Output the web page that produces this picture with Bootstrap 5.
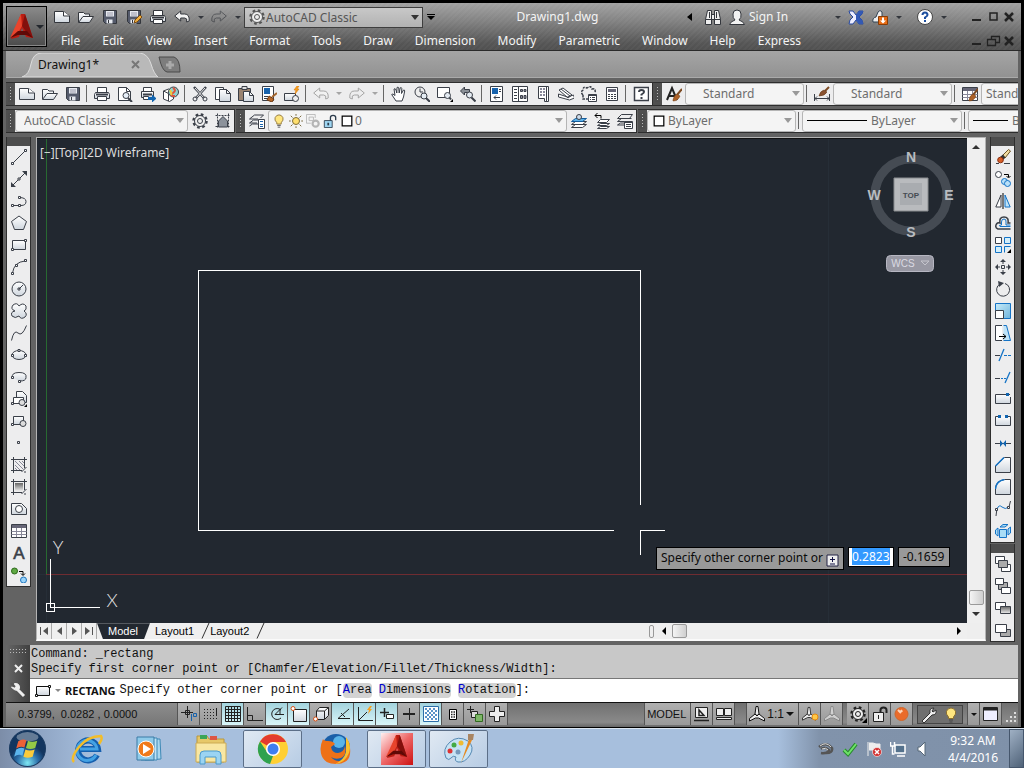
<!DOCTYPE html>
<html lang="en">
<head>
<meta charset="utf-8">
<meta name="viewport" content="width=device-width, initial-scale=1">
<title>Drawing1.dwg</title>
<link href="https://cdn.jsdelivr.net/npm/bootstrap@5.3.0/dist/css/bootstrap.min.css" rel="stylesheet">
<style>
body{font:12px/16px "Noto Sans","Open Sans",sans-serif;background:#000;color:#222;overflow:hidden}
button,input,select{font:inherit;color:inherit}
button{border:0;padding:0;background:none;display:flex;align-items:center;justify-content:center;flex:none}
svg{display:block;flex:none}
a{color:inherit;text-decoration:none}
.ic{width:16px;height:16px;fill:none;stroke:currentColor;overflow:visible}
.frame{border:3px solid #000;border-bottom-width:1px;background:#636363;min-height:0}
/* title bar */
.titlebar{height:48px;border-bottom:1px solid #2a2a2a;background:repeating-linear-gradient(135deg,#ffffff08 0 2px,#0000 2px 4px),linear-gradient(#a2a2a2,#858585 35%,#565656 85%,#505050);color:#33363c}
.titlemain{min-width:0}
.appbtn{width:41px;height:41px;margin:3px 3px 0 3px;border:1px solid #000;outline:1px solid #888;outline-offset:-2px;background:linear-gradient(#8a8a8a,#4b4b4b);gap:2px;color:#23272d}
.qrow{height:28px}
.qrow .tool{width:24px}
.drop{width:13px;height:20px}
.drop::after,.caret::after{content:"";display:block;border:4px solid transparent;border-top-color:currentColor;border-bottom:0}
.drop::after{border-width:3px;border-bottom:0}
.light{color:#f4f4f4}
.custom{width:15px;height:20px;color:#000}
.menu{gap:22px;height:19px;padding-left:11px}
.signin{width:38px;white-space:nowrap;margin-right:44px}
.helpdrop{margin-right:19px}
.wbtn{width:16px;height:16px;color:#222}
/* file tabs */
.strip{height:27px;margin:0 3px;background:linear-gradient(#a5a5a5,#929292);border-bottom:1px solid #aaa}
.doc{width:136px;height:24px;color:#111;padding:0 18px 0 16px;position:relative}
.doc svg.shape{position:absolute;inset:0;z-index:0}
.doc span,.doc button{position:relative}
/* combo boxes */
.combo{height:24px;background:#f4f4f4;border:1px solid #8d8d8d;border-radius:3px;color:#6d6d6d;display:flex;align-items:center;min-width:0}
.combo .form-select{height:22px;padding:0 16px 0 8px;border:0;background-color:transparent;background-image:url("data:image/svg+xml,%3Csvg xmlns='http://www.w3.org/2000/svg' width='8' height='5'%3E%3Cpath d='M0 0h8l-4 5z' fill='%23999'/%3E%3C/svg%3E");background-size:8px 5px;background-position:right 3px center;font-size:12px;line-height:20px;color:inherit;border-radius:0;min-width:0}
.wsp{width:179px;height:21px;border-radius:0;background:linear-gradient(#c8c8c8,#b2b2b2);border-color:#3e3e3e;color:#555}
.wsp .form-select{height:19px;padding-left:1px;background-image:url("data:image/svg+xml,%3Csvg xmlns='http://www.w3.org/2000/svg' width='8' height='5'%3E%3Cpath d='M0 0h8l-4 5z' fill='%23333'/%3E%3C/svg%3E")}
/* horizontal toolbars */
.tbrow{margin:0 3px;padding-top:4px}
.row2{padding-top:3px}
.row2 .bar{margin-right:1px}
.bar{height:24px;background:#ededee;border:1px solid #2e2e2e;border-left:0;color:#3a3f48;display:flex;align-items:center}
.tbrow .bar:last-child{margin-right:0;border-right:0}
.bar .combo{height:22px;border-color:#b5b5b5}
.bar .combo .form-select{height:20px}
.grip{width:9px;align-self:stretch;background:#4d4d4d radial-gradient(#bbb 35%,#0000 40%) 1px 3px/3px 3px;border:2px solid #505050;border-width:3px 2px;flex:none}
.tool{width:23px;height:22px;color:inherit}
.sep{width:6px;height:17px;flex:none;background:linear-gradient(#666,#666) 2px 0/1px 100% no-repeat}
.off{color:#a5a5a5}
.sty{width:119px;flex:none}
.sty .form-select{padding-left:17px}
.tight .form-select{padding-left:4px}
.ws2{width:173px}
.lay{width:299px;padding-left:3px}
.lay .ic{width:14px;height:14px;margin-right:3px}
.lay .swt{margin-right:1px}
.col1{width:149px;flex:none}
.col2,.col3{width:160px;flex:none}
.lt{flex:0 0 60px;height:1px;background:#000;margin-left:4px}
.col3 .lt{flex-basis:35px}
/* work area */
.work{padding:4px 6px 0 3px;gap:4px;min-height:0}
.vbar{width:25px;background:#ededee;border:1px solid #2e2e2e;border-top:0;color:#3a3f48}
.vgrip{height:9px;background:#4d4d4d;padding:2px 3px}
.vgrip::after{content:"";display:block;height:5px;width:14px;background:radial-gradient(#bbb 35%,#0000 40%) 0 0/2px 2px}
.rcol{gap:1px}
.view{margin-left:1px;background:#eee;border:1px solid #b4b4b4;border-bottom:2px solid #fafafa;display:grid;grid-template-columns:minmax(0,1fr) 18px;grid-template-rows:minmax(0,1fr) 16px;min-width:0}
.model{background:#222830;position:relative;overflow:hidden;border-top:1px solid #111}
.scene{position:absolute;inset:0;width:100%;height:100%}
.vlabel{position:absolute;left:3px;top:6px;color:#dcdcdc}
.cube{position:absolute;right:10px;top:10px;width:92px;height:124px}
.prompt{position:absolute;left:619px;top:408px;gap:4px;color:#0a0a0a}
.prompt>*{border:1px solid #000;background:#999;height:20px}
.prompt label{height:23px;width:188px;padding:2px 4px}
.prompt input{width:46px;padding:0 3px;border-radius:0;background:#fff;outline:0;caret-color:transparent}
.prompt input+input{width:52px;background:#999;padding-left:4px}
.prompt input::selection{background:#3399ff;color:#fff}
.vscroll{background:#efefef;color:#333}
.thumb{border:1px solid #999;border-radius:2px;background:linear-gradient(90deg,#f4f4f4,#cfcfcf)}
.vth{width:15px;height:15px}
.hth{width:15px;height:14px}
.sheets{font:11px/16px "Liberation Sans",sans-serif;color:#000;background:#efefef}
.nv{width:15px;height:16px;border-right:1px solid #aaa;color:#555}
.sh{padding:0 7px 0 5px}
.slash{margin-right:-5px}
.shon{background:#222830;color:#fff;clip-path:polygon(0 0,100% 0,calc(100% - 6px) 100%,6px 100%);padding:0 12px 0 11px}
.hs{width:318px}
.split{width:5px;height:13px;border:1px solid #999;border-radius:2px}
/* command line */
.cmd{height:57px;margin:4px 3px 0;color:#111;font:12px/15px "Liberation Mono",monospace}
.cmdside{width:24px;background:linear-gradient(90deg,#666,#404040);color:#eee}
.cgrip{width:18px;height:6px;margin-top:3px;background:radial-gradient(#bbb 35%,#0000 40%) 0 0/3px 3px}
.hist{height:34px;background:#c8c8c8;border-bottom:1px solid #777;padding:2px 1px 0;white-space:pre}
.line{background:#fff;padding-left:5px;white-space:pre}
.line .drop{color:#888}
.opt{display:inline-block;background:#d3d3d3;border-radius:4px;color:#111}
.opt::first-letter{color:#00c}
.rc{font:bold 11px/15px "Noto Sans","Open Sans",sans-serif;margin:0 4px 0 1px}
/* status bar */
.status{height:25px;margin:0 3px;background:linear-gradient(#707070,#8a8a8a 80%,#666);border-top:1px solid #111;font:11px/16px "Liberation Sans",sans-serif;color:#111}
.status .tool,.coords,.sbt{height:22px;background:linear-gradient(#b0b0b0,#999);border-right:1px solid #555}
.status .tool{width:22px;color:#222}
.coords{width:172px;background:linear-gradient(#8d8d8d,#777);padding-left:12px;white-space:pre;display:flex;align-items:center}
.status .on{background:linear-gradient(#a3d3dd,#d9f5f9)}
.status .dim{color:#777}
.status .sbt{padding:0 4px 0 2px;border-left:1px solid #555}
.status .scl{margin-left:11px;gap:2px;padding-right:4px;font-size:12px}
.iso{width:46px;height:19px;margin:2px 4px 0;background:#6f6f6f;border:1px solid #444}
.status .drop.sbt{padding:0;width:13px}
/* taskbar */
.task{height:40px;background:linear-gradient(90deg,#7c8da8,#8fa5c4 40px,#a7bfdd 95px,#a7bfdd 76%,#8193ab 80%,#7f91a9);border-top:1px solid #dbe6f2}
.tk{width:59px;height:38px;margin-right:3px;border-radius:2px}
.act{border:1px solid #e9f2fb;outline:1px solid #5c6f88;outline-offset:-1px;background:linear-gradient(135deg,#e0e9f3,#b7cce4)}
.task svg{width:32px;height:32px}
.start{width:54px}
.task .start svg{width:37px;height:37px}
.tray{margin-right:7px}
.task .tray svg{width:16px;height:16px}
.clock{width:72px;color:#fff;text-align:center;line-height:17px}
.desk{width:15px;height:39px;border:1px solid #45566c;background:linear-gradient(135deg,#9fb0c4,#4f6278)}
</style>
</head>
<body class="d-flex flex-column vh-100">
<svg width="0" height="0" class="position-absolute" aria-hidden="true">
<defs>
<linearGradient id="gp" x2="0" y2="1"><stop stop-color="#fff"/><stop offset="1" stop-color="#cfd6de"/></linearGradient>
<linearGradient id="gd" x2="0" y2="1"><stop stop-color="#666"/><stop offset="1" stop-color="#eee"/></linearGradient>
<linearGradient id="gb" x2="1" y2="1"><stop stop-color="#c8ecfa"/><stop offset="1" stop-color="#6fb4dc"/></linearGradient>
<radialGradient id="orb" cy=".9"><stop stop-color="#7fe8f4"/><stop offset=".6" stop-color="#2b6da8"/><stop offset="1" stop-color="#12355f"/></radialGradient>
<linearGradient id="red" x2="1" y2="1"><stop stop-color="#fff0f0"/><stop offset=".5" stop-color="#e66"/><stop offset="1" stop-color="#c11"/></linearGradient>
<pattern id="chk" width="4" height="4" patternUnits="userSpaceOnUse"><path d="M0 0h2v2H0zM2 2h2v2H2z" fill="#5a93c8" stroke="none"/></pattern>
</defs>
<symbol id="new" viewBox="0 0 16 16"><path d="M.5 2.500h9l6 4.500v6.500H.5z" fill="url(#gp)"/><path d="M9.500 2.500V7h6" fill="#fff"/></symbol>
<symbol id="open" viewBox="0 0 16 16"><path d="M.5 13V3.500h5L7 5h4.500v2.500" fill="url(#gp)"/><path d="M.5 13.500 5 7.500h10.500l-4 6z" fill="url(#gp)"/></symbol>
<symbol id="save" viewBox="0 0 16 16"><path d="M1.500 1.500h13v13h-11l-2-2z" fill="#555b6c"/><path d="M4 2h8v5.500H4z" fill="#e7eaf0" stroke="none"/><path d="M5 4h6M5 6h6" stroke="#99a"/><path d="M4.500 10.500h6v4h-6z" fill="#e7eaf0" stroke="none"/><path d="M6.500 11v3"/></symbol>
<symbol id="saveas" viewBox="0 0 16 16"><use href="#save" width="16" height="16"/><path d="m8 14 1-3 5-5 2 2-5 5z" fill="#f0b040" stroke="#7a4a10"/></symbol>
<symbol id="print" viewBox="0 0 16 16"><path d="M3.500 7V1.500h9V7" fill="#fff"/><path d="M1.500 6.500h13l1 2v4H.5v-4z" fill="url(#gp)"/><path d="M3.500 10.500h9v4h-9z" fill="#fff"/><path d="M2 8.500h12" stroke-width="2"/></symbol>
<symbol id="preview" viewBox="0 0 16 16"><path d="M1.500 1.500h8l4 4v9h-12z" fill="#fff"/><path d="M9.500 1.500v4h4"/><circle cx="9" cy="9.500" r="3" fill="#e8f0f8"/><path d="m11 12 4 4" stroke-width="2"/></symbol>
<symbol id="publish" viewBox="0 0 16 16"><path d="M3.500 6V1.500h8V6" fill="#fff"/><path d="M1.500 5.500h12v6h-12z" fill="url(#gp)"/><path d="M3 8.500h9" stroke-width="2"/><path d="M3.500 10.500h5v3h-5z" fill="#fff"/><path d="M8 11h4V8.500l4.500 4-4.500 4V14H8z" fill="#1265b0" stroke="none"/></symbol>
<symbol id="globe" viewBox="0 0 16 16"><path d="m.5 5 5-2 5 2v8l-4 2.500L.5 13zM.5 5l5 2.500V15" fill="#fff"/><circle cx="10.500" cy="6" r="5" fill="#8fd2ce"/><path d="M10 2q4 2 0 5t2 3" stroke="#e0523c" stroke-width="2"/><path d="M7 4q2 3 1 5" stroke="#f0cf3b" stroke-width="2"/></symbol>
<symbol id="cut" viewBox="0 0 16 16"><path d="m2 1 10 11M14 1 4 12" stroke-width="2.500"/><path d="m3 2 9 10M13 2 4 12" stroke="#eee"/><circle cx="3" cy="13" r="2"/><circle cx="13" cy="13" r="2"/></symbol>
<symbol id="copy" viewBox="0 0 16 16"><path d="M.5 1.500h8v12h-8z" fill="#fff"/><path d="M4.500 3.500h7l4 4v8h-11z" fill="url(#gp)"/><path d="M11.500 3.500v4h4"/></symbol>
<symbol id="paste" viewBox="0 0 16 16"><path d="M.5 2.500h12v12H.5z" fill="#9a8370"/><path d="M4 .5h5v3H4z" fill="#ddd"/><path d="M5.500 5.500h6l4 4v6h-10z" fill="url(#gp)"/><path d="M11.500 5.500v4h4"/></symbol>
<symbol id="match" viewBox="0 0 16 16"><path d="M1.500.5h11v14h-11z" fill="#fff"/><path d="M3 2h6v6H3z" fill="#1863ad" stroke="none"/><path d="M3 10.500h4M3 12.500h4"/><path d="m16 7-5 4" stroke="#a5652c" stroke-width="2"/><path d="m8 10 5 3-2 3-5-2z" fill="#b9692a" stroke="#6d3a12"/></symbol>
<symbol id="block" viewBox="0 0 16 16"><path d="M.5 14.500v-7h11v7z" fill="url(#gp)"/><circle cx="11.500" cy="12.500" r="3" fill="#eee"/><path d="m13 0-3 4h2l-1 4 4-5h-2l2-3z" fill="#f8a01c" stroke="#d8790c" stroke-width=".6"/></symbol>
<symbol id="undo" viewBox="0 0 16 16"><path d="m.7 7 6-5v3h4q5 0 4.500 7l-2.500 1q1-4-2-4H6.700v3z" fill="#f2f2f2"/></symbol>
<symbol id="redo" viewBox="0 0 16 16"><path d="m15.300 7-6-5v3h-4Q.3 5 .8 12l2.500 1q-1-4 2-4h4v3z"/></symbol>
<symbol id="pan" viewBox="0 0 16 16"><path d="M5 15 .7 8.500Q1.500 7 4 9.500L3 3q1.300-1 2 1l.8 3L6 1.500q1.300-1 1.700.3L8.200 7l1-5.200q1.500-.6 1.600.8L10.500 7.500 12.500 4q1.300-.2 1.200 1L12.500 11 11 15z" fill="#fff"/></symbol>
<symbol id="zoom" viewBox="0 0 16 16"><circle cx="6" cy="6" r="5" fill="#eee"/><path d="M6 2.500V6h3"/><circle cx="10" cy="10" r="3" fill="#e4ebf2"/><path d="m12 12 4 4" stroke-width="2"/></symbol>
<symbol id="zoomw" viewBox="0 0 16 16"><path d="M.5 1.500h12v10H.5z" fill="#fff"/><circle cx="10.500" cy="9.500" r="3" fill="#e4ebf2"/><path d="m12.500 11.500 1.500 2" stroke-width="2"/><path d="M17 12v5h-5z" fill="#000" stroke="none"/></symbol>
<symbol id="zoomp" viewBox="0 0 16 16"><path d="m.5 5 4-4v2.500h5v3h-5V9z" fill="#8a8f96"/><circle cx="9.500" cy="9" r="3" fill="#e4ebf2"/><path d="m11.500 11.500 4 4" stroke-width="2"/></symbol>
<symbol id="prop" viewBox="0 0 16 16"><path d="M1.500.5h12v15h-12z" fill="#fff"/><path d="M3 2h6v6H3z" fill="#1863ad" stroke="none"/><path d="M10 3.500h2M10 5.500h2M5 11.500h6M7 9.500l-2 2 2 2"/></symbol>
<symbol id="dc" viewBox="0 0 16 16"><path d="M.5.5h15v15H.5zM6.500.5v15" fill="#fff"/><path d="M2 3.500h3M2 6.500h3M2 9.500h3M2 12.500h3M8.500 3.500h2v2h-2zM12 3.500h2v2h-2zM8.500 9.500h2v3h-2zM12 9.500h2v3h-2z" fill="#889"/></symbol>
<symbol id="tp" viewBox="0 0 16 16"><path d="M3.500.5h10v15h-4v-3h-6z" fill="#fff"/><path d="M5 3h5M5 6h5M5 9h5" stroke="#889" stroke-width="2" stroke-dasharray="2 1"/><path d="M11.500.5v15"/></symbol>
<symbol id="sheet" viewBox="0 0 16 16"><path d="m1 4 4-2 9 7-4 3zM.5 8l9 3 6-2 1 3-5 2-11-3z" fill="#fff"/><path d="m3 3 9 7"/></symbol>
<symbol id="markup" viewBox="0 0 16 16"><path d="M2 9Q-1 6 2 4q0-4 4-2 4-3 5 1 4-1 3 4M2 9v4h5" stroke-width="1.500" stroke-dasharray="2.500 1"/><path d="M7.500 8.500h8v7h-8z" fill="#fff"/><path d="M7.500 9.500h8M9 11.500h1M11 11.500h3M9 13.500h1M11 13.500h3"/></symbol>
<symbol id="calc" viewBox="0 0 16 16"><path d="M2.500 1.500h11v13h-11z" fill="#fff"/><path d="M4 3h8v3H4z" fill="#667" stroke="none"/><path d="M4 8.500h8M4 10.500h8M4 12.500h8" stroke-width="1.200" stroke-dasharray="2 1"/></symbol>
<symbol id="qbox" viewBox="0 0 16 16"><path d="M1.500 1.500h14v13h-14z" fill="#fff" stroke-width="1.500"/><path d="M6 6q0-2 2.500-2T11 6q0 1-2.500 2.500v1M8.500 11v2" stroke-width="2"/></symbol>
<symbol id="brush" viewBox="0 0 16 16"><path d="m16 3-5 6" stroke="#7d4a22" stroke-width="2"/><path d="M7 14q1-5 4-6l3 2q-2 5-7 5z" fill="#ad6128" stroke="#6d3a12" stroke-width=".5"/></symbol>
<symbol id="dimst" viewBox="0 0 16 16"><path d="M.5 8v7M15.500 8v7M1 12.500h14m-12-2-2 2 2 2m10-4 2 2-2 2"/><path d="m15 1-4 4" stroke="#7d4a22" stroke-width="2"/><path d="M5 10q1-5 5-6l3 2q-2 4-8 4z" fill="#8a5230" stroke="#5a3212" stroke-width=".5"/></symbol>
<symbol id="table" viewBox="0 0 16 16"><path d="M.5 1.500h15v13H.5z" fill="#fff"/><path d="M1 2h14v3H1z" fill="#667" stroke="none"/><path d="M.5 8.500h15M.5 11.500h15M5.500 5v9M10.500 5v9" stroke="#889"/></symbol>
<symbol id="gear" viewBox="0 0 16 16"><circle cx="8" cy="8" r="6.500" stroke-width="2.500" stroke-dasharray="2.600 2.500"/><circle cx="8" cy="8" r="5.500" fill="#eee"/><circle cx="8" cy="8" r="2.500"/></symbol>
<symbol id="myws" viewBox="0 0 16 16"><path d="M.5 2.500h15M.5 13.500h15M2.500.5v15M13.500.5v15" stroke-dasharray="2 1"/><path d="M3.500 14V8L8 3.500 12.500 8v6z" fill="#8c929b"/></symbol>
<symbol id="layprop" viewBox="0 0 16 16"><path d="m.5 13 3-2h6M.5 10l4-3h8M.5 6l5-4h9l-3 3"/><path d="M.5 6H9M.5 10H8"/><path d="M9.500 6.500h6v9h-6z" fill="#fff"/><path d="M11 8.500h3M11 11.500h3M11 13.500h3" stroke="#1863ad"/></symbol>
<symbol id="laycur" viewBox="0 0 16 16"><path d="m.5 14.500 4-3h11l-4 3zM.5 11.500l4-3h11l-4 3z" fill="#fff"/><path d="m.5 8.500 4-3h11l-4 3z" fill="#5fb2e8" stroke="#135c9c"/><circle cx="8" cy="4" r="2.500" fill="#cde"/></symbol>
<symbol id="layprev" viewBox="0 0 16 16"><path d="m3.500 15.500 3-2h9l-3 2zM3.500 12.500l3-2h9l-3 2zM3.500 9.500l3-3h9l-3 3z" fill="#fff"/><path d="M1 2.500h6v3M3.500 0 1 2.500 3.500 5" stroke="#000"/></symbol>
<symbol id="laystate" viewBox="0 0 16 16"><path d="m.5 12 3-2h8M.5 8.500l4-3h10M.5 5.500l4-4h11l-3 4zM.5 8.500H8M.5 12H7"/><path d="M7.500 8.500h8v7h-8z" fill="#fff"/><path d="M8 9.500h7M9 11.500h5M9 13.500h5"/></symbol>
<symbol id="bulb" viewBox="0 0 16 16"><path d="M5.500 10Q2.500 7 3.500 4.200 5 1 8 1t4.500 3.200Q13.500 7 10.500 10v1.500h-5z" fill="#ffe680" stroke="#8d7030"/><path d="M6 13h4M6.500 15h3" stroke="#444"/></symbol>
<symbol id="sun" viewBox="0 0 16 16"><circle cx="8" cy="8" r="4" fill="#ffdf6d" stroke="#6d5a28"/><path d="M8 0v2M8 14v2M0 8h2M14 8h2M2 2l2 2M12 12l2 2M14 2l-2 2M4 12l-2 2" stroke="#6d5a28"/></symbol>
<symbol id="vpf" viewBox="0 0 16 16"><g stroke="#b5b5b5"><path d="M.5.5h10v4M.5.5v10h5M3.500 3.500h5v4h-5z"/><circle cx="11" cy="11" r="3.500" stroke-width="2.500"/></g></symbol>
<symbol id="unlock" viewBox="0 0 16 16"><g stroke="#2c3c4c"><path d="M8.500 8V4q0-2.500 3-2.500t3 2.500v3" stroke-width="1.500"/><path d="M1.500 7.500h9v8h-9z" fill="#9fd6f2"/><path d="M6 10v3" stroke-width="2"/></g></symbol>
<symbol id="sq" viewBox="0 0 16 16"><path d="M2.500 2.500h11v11h-11z" fill="#fff" stroke="#000" stroke-width="1.400"/></symbol>
<symbol id="line" viewBox="0 0 16 16"><path d="M2 14 14 2"/><path d="M.5 13.500h2v2h-2zM13.500.5h2v2h-2z" fill="#fff"/></symbol>
<symbol id="xline" viewBox="0 0 16 16"><path d="M1 15 15 1"/><path d="M0 11v5h5zM11 0h5v5z" fill="currentColor" stroke="none"/><path d="M7 7h2v2H7z" fill="#fff"/></symbol>
<symbol id="pline" viewBox="0 0 16 16"><path d="M2 12.500h8q5 0 5-4t-7-4"/><path d="M.5 11.500h2v2h-2zM7.500 11.500h2v2h-2zM7.500 3.500h2v2h-2z" fill="#fff"/></symbol>
<symbol id="poly" viewBox="0 0 16 16"><path d="M8 1 15.500 6.500l-3 8h-9l-3-8z" fill="url(#gp)"/></symbol>
<symbol id="rect" viewBox="0 0 16 16"><path d="M1.500 3.500h13v9h-13z" fill="url(#gp)"/><path d="M.5 11.500h2v2h-2zM13.500 2.500h2v2h-2z" fill="#fff"/></symbol>
<symbol id="arc" viewBox="0 0 16 16"><path d="M1.500 14Q3 3 14 2"/><path d="M.5 13.500h2v2h-2zM4.500 5.500h2v2h-2zM13.500.5h2v2h-2z" fill="#fff"/></symbol>
<symbol id="circle" viewBox="0 0 16 16"><circle cx="8" cy="8" r="7" fill="url(#gp)"/><path d="m8 8 4-4M7 7h2v2H7z"/></symbol>
<symbol id="cloud" viewBox="0 0 16 16"><path d="M4 8Q-1 6 2 2q4-3 6 1 4-4 7 0 1 4-2 5 4 3 1 6-4 3-6-1-4 3-7 0-2-4 3-5z" fill="url(#gp)"/></symbol>
<symbol id="spline" viewBox="0 0 16 16"><path d="M.5 15.500Q3 4 7 8t8.500-7.500"/></symbol>
<symbol id="ellipse" viewBox="0 0 16 16"><ellipse cx="8" cy="8" rx="7" ry="4.500" fill="url(#gp)"/><path d="M.5 7.500h2v2h-2zM13.500 7.500h2v2h-2zM7 2.500h2v2H7z" fill="#fff"/></symbol>
<symbol id="earc" viewBox="0 0 16 16"><path d="M1.500 9Q0 3.500 8 3.500t7 5Q15 12 9 12" fill="url(#gp)"/><path d="M.5 7.500h2v2h-2zM7.500 11.500h2v2h-2z" fill="#fff"/></symbol>
<symbol id="insb" viewBox="0 0 16 16"><path d="M5.500 7V.5h6l4 4v7h-3" fill="url(#gp)"/><path d="M2.500 6.500h10v6h-10z" fill="#fff"/><circle cx="11" cy="11.500" r="3" fill="#ddd"/><path d="M.5 11.500h2v2h-2z"/><path d="M17 12v5h-5z" fill="#000" stroke="none"/></symbol>
<symbol id="mkb" viewBox="0 0 16 16"><path d="M2.500 3.500h10v8h-10z" fill="url(#gp)"/><circle cx="12" cy="10.500" r="3" fill="#ddd"/><path d="M.5 10.500h2v2h-2z" fill="#fff"/></symbol>
<symbol id="point" viewBox="0 0 16 16"><path d="M6.500 6.500h2v2h-2z"/></symbol>
<symbol id="hatch" viewBox="0 0 16 16"><path d="M0 2.500h16M0 13.500h11M2.500 0v16M13.500 0v11m2-1-5 5M14 14v2"/><path d="m4 4 8 8M4 8l5 5M8 4l5 5M4 11l2 2M11 4l2 2" stroke="#889"/></symbol>
<symbol id="grad" viewBox="0 0 16 16"><path d="M4 4h8v8H4z" fill="url(#gd)" stroke="none"/><path d="M0 2.500h16M0 13.500h11M2.500 0v16M13.500 0v11m2-1-5 5M14 14v2"/></symbol>
<symbol id="region" viewBox="0 0 16 16"><path d="M.5 2.500h10l5 5v6H.5z" fill="url(#gp)"/><circle cx="8" cy="8" r="3.500" fill="#fff"/></symbol>
<symbol id="mtext" viewBox="0 0 16 16"><text x="8" y="14" text-anchor="middle" font-family="Liberation Sans" font-size="17" fill="currentColor" stroke="currentColor" stroke-width=".6">A</text></symbol>
<symbol id="addsel" viewBox="0 0 16 16"><circle cx="3.500" cy="4" r="3" fill="#5ea843" stroke="#2d6a1c"/><circle cx="12.500" cy="13" r="3" fill="#9ad4fb" stroke="#2076bd"/><path d="M8 4.500h4V8m-2-1.500 2 2 2-2" stroke="#000"/></symbol>
<symbol id="erase" viewBox="0 0 16 16"><path d="M1 14.500h3M9 14.500h6"/><path d="m7 7 6.500-6.500 2 1.500L10 9z" fill="#f3dda2" stroke="#6b5324"/><path d="m5 8 3-2.500 2.500 3L8 11z" fill="#333" stroke="none"/><circle cx="5.500" cy="11" r="2.800" fill="#d95f27" stroke="#8a2f10"/></symbol>
<symbol id="mcopy" viewBox="0 0 16 16"><circle cx="3.500" cy="3.500" r="3" fill="#fff"/><path d="M9 3.500h4.500V6m-2-1 2 2 2-2" stroke="#000"/><g stroke="#1473c6" fill="#b9e0f8"><circle cx="9.500" cy="10.500" r="3"/><circle cx="12.500" cy="12.500" r="3"/></g></symbol>
<symbol id="mirror" viewBox="0 0 16 16"><path d="M6 2v12H.8z" fill="#fff"/><path d="M8 0v16" stroke="#000"/><path d="M10 2v12h5.200z" fill="#bfe3f8" stroke="#1473c6"/></symbol>
<symbol id="offset" viewBox="0 0 16 16"><path d="M15.500 14H3Q0 13 1 10t4-2q-1-6 4-6t4 6h2.500" stroke-width="1.500"/><path d="M15.500 11.500H5Q3 10 6.500 10V7q0-3 2.500-3t2 3v3h4.500" stroke="#1473c6"/></symbol>
<symbol id="array" viewBox="0 0 16 16"><path d="M.5.5h6v6h-6z" fill="#fff"/><path d="M9.500.5h6v6h-6zM.5 9.500h6v6h-6zM9.500 15.500v-6h6" fill="#d3eefa" stroke="#1473c6"/><path d="M17 11v6h-6z" fill="#000" stroke="none"/></symbol>
<symbol id="move" viewBox="0 0 16 16"><path d="M6.500 6.500h3v3h-3zM8 1v4M8 11v4M1 8h4M11 8h4"/><path d="m8 0 3 3H5zM8 16l3-3H5zM0 8l3-3v6zM16 8l-3-3v6z" fill="currentColor" stroke="none"/></symbol>
<symbol id="rotate" viewBox="0 0 16 16"><path d="M10 2.500a6.500 6.500 0 1 1-5 .5"/><path d="m3 0 6 2-5 4z" fill="currentColor" stroke="none"/></symbol>
<symbol id="scale" viewBox="0 0 16 16"><path d="M.5.5h15v15H.5z" fill="url(#gb)" stroke="#1473c6"/><path d="M.5 7.500h8v8h-8z" fill="#fff"/></symbol>
<symbol id="stretch" viewBox="0 0 16 16"><path d="M7 .5H.5v15H7" fill="#fff"/><path d="M8.500.5h3l4 15h-7" fill="#bfe3f8" stroke="#1473c6"/><path d="M4 11.500h7M8 9l3 2.500L8 14" stroke="#000"/></symbol>
<symbol id="trim" viewBox="0 0 16 16"><path d="M0 8.500h5"/><path d="M4 14 9 2" stroke="#1473c6" stroke-width="1.300"/><path d="M9 8.500h7" stroke="#1473c6" stroke-dasharray="3 1"/></symbol>
<symbol id="extend" viewBox="0 0 16 16"><path d="M0 9.500h5"/><path d="M6 9.500h5" stroke="#1473c6" stroke-dasharray="2 1"/><path d="m10 14 5-11" stroke="#1473c6" stroke-width="1.300"/></symbol>
<symbol id="brkpt" viewBox="0 0 16 16"><path d="M15.500 12.500H.5v-9H15" fill="url(#gp)"/><path d="M15.500 6v6.500"/><path d="M11 2h3v3h-3z" fill="#1265b0" stroke="none"/></symbol>
<symbol id="brk" viewBox="0 0 16 16"><path d="M3 3.500H.5v9h15v-9H13" fill="url(#gp)"/><path d="M3 2h3v3H3zM10 2h3v3h-3z" fill="#1265b0" stroke="none"/></symbol>
<symbol id="join" viewBox="0 0 16 16"><path d="M0 8.500h16"/><path d="m5 5 3 3.500L5 12zM11 5 8 8.500l3 3.500z" fill="#1265b0" stroke="none"/></symbol>
<symbol id="chamfer" viewBox="0 0 16 16"><path d="M9.500.5h6v15H.5V9z" fill="url(#gp)"/><path d="m.5 9 8.500-8.500" stroke="#1473c6" stroke-width="1.500"/></symbol>
<symbol id="fillet" viewBox="0 0 16 16"><path d="M9.500.5h6v15H.5V9Q1 2 9.500.5" fill="url(#gp)"/><path d="M.5 10Q1 2 9.500.5" stroke="#1473c6" stroke-width="1.500"/></symbol>
<symbol id="blend" viewBox="0 0 16 16"><path d="m1 15 1-8M14 6l1.500-6"/><path d="M2 8q2-5 5-2t7 0" stroke="#1473c6"/><path d="M.5 7.500h2v2h-2zM12.500 5.500h2v2h-2z" fill="#fff"/></symbol>
<symbol id="explode" viewBox="0 0 16 16"><path d="M4.500 6.500h7v8h-7zM5 4l3-2.500h5L10 4zM13 6l2.500-2v6L13 12zM.5 7 3 5v8l-2.500-2z" fill="#a9ddf6" stroke="#1473c6"/></symbol>
<symbol id="ord1" viewBox="0 0 16 16"><path d="M.5.500h9v7h-9zM6.500 8.500h9v7h-9z" fill="#fff"/><path d="M3.500 4.500h9v7h-9z" fill="#aaa"/></symbol>
<symbol id="ord2" viewBox="0 0 16 16"><path d="M3.500 4.500h9v7h-9z" fill="#aaa"/><path d="M.5.500h8v6h-8zM6.500 9.500h9v6h-9z" fill="#fff"/></symbol>
<symbol id="ord3" viewBox="0 0 16 16"><path d="M.5 2.500h10v7H.5z" fill="#fff"/><path d="M5.500 6.500h10v7h-10z" fill="url(#gd)"/></symbol>
<symbol id="ord4" viewBox="0 0 16 16"><path d="M5.500 7.500h10v7h-10z" fill="#aaa"/><path d="M.5 2.500h11v8H.5z" fill="#fff"/></symbol>
<symbol id="wrench" viewBox="0 0 16 16"><path d="m7 7 7 7" stroke="#eee" stroke-width="3"/><path d="M4.500 1.500Q10 1 9.500 6.500q-4 4-8-1.500L5 6z" fill="#eee" stroke="#eee"/><path d="m1 1 4 4" stroke="#555" stroke-width="2"/></symbol>
<symbol id="ann" viewBox="0 0 16 16"><path d="M7 .5h2l1 7.500 5.500 4.500v2.500L9.500 12h-3L.5 15v-2.500L6 8zM6 8l2 2 2-2" fill="#eee"/></symbol>
<symbol id="logo" viewBox="0 0 24 26"><g stroke="none"><path d="M11 0h4l8 24-7-1-4-9-3 9-8 2z" fill="#b91c12"/><path d="M11 0 0 24l8-5 4-7z" fill="#e8442c"/><path d="m15 0-3 12 5 7 6 5z" fill="#82100c"/><path d="m0 24 8-7h9l6 7-7-3H8z" fill="#5f0906"/></g></symbol>
</svg>

<main class="frame d-flex flex-column flex-grow-1">
<header class="titlebar d-flex">
  <button class="appbtn" aria-label="Application menu"><svg width="24" height="26"><use href="#logo"/></svg><span class="caret"></span></button>
  <div class="titlemain flex-grow-1">
    <div class="qrow d-flex align-items-center">
      <button class="tool" aria-label="New"><svg class="ic"><use href="#new"/></svg></button>
      <button class="tool" aria-label="Open"><svg class="ic"><use href="#open"/></svg></button>
      <button class="tool" aria-label="Save"><svg class="ic"><use href="#save"/></svg></button>
      <button class="tool" aria-label="Save As"><svg class="ic"><use href="#saveas"/></svg></button>
      <button class="tool" aria-label="Plot"><svg class="ic"><use href="#print"/></svg></button>
      <button class="tool" aria-label="Undo"><svg class="ic"><use href="#undo"/></svg></button>
      <button class="drop" aria-label="Undo list"></button>
      <button class="tool" aria-label="Redo"><svg class="ic" opacity=".6"><use href="#redo"/></svg></button>
      <button class="drop" aria-label="Redo list"></button>
      <div class="combo wsp"><svg class="ic ms-1"><use href="#gear"/></svg><select class="form-select" aria-label="Workspace"><option>AutoCAD Classic</option></select></div>
      <button class="custom" aria-label="Customize"><svg width="8" height="7"><path d="M0 0h8v1H0zM0 2h8L4 6z"/></svg></button>
      <div class="flex-grow-1 text-center light text-truncate">Drawing1.dwg</div>
      <button class="tool" aria-label="Collapse"><svg width="5" height="8"><path d="M5 0v8L0 4z"/></svg></button>
      <button class="tool" aria-label="Search"><svg class="ic"><path d="M.5 15.500v-5l2-9h4v14zM15.500 15.500v-5l-2-9h-4v14zM6.500 5.500h3v5h-3z" fill="#eee"/><path d="M.5 10.500h6M9.500 10.500h6M4.500 3v6M11.500 3v6"/></svg></button>
      <button class="tool" aria-label="Account"><svg class="ic"><path d="M.5 15.500q1-3 5.500-4.500Q3.500 9 4 5q0-4 4-4t4 4q.5 4-2 6 4.500 1.500 5.500 4.500z" fill="#f2f2f2"/></svg></button>
      <button class="light signin justify-content-start">Sign In</button>
      <button class="drop ms-auto" aria-label="Sign in menu"></button>
      <button class="tool" aria-label="Exchange"><svg class="ic"><path d="M1 2h4l3 4 3-4h4l-1 3-3 3 3 3 1 4h-4l-3-4-3 4H1l1-4 3-3-3-3z" fill="#eef" stroke="#2749a0"/><path d="m8 6 3-4h4l-1 3-3 3 3 3 1 4h-4l-3-4z" fill="#3359b4" stroke="none"/></svg></button>
      <button class="tool" aria-label="Autodesk 360"><svg class="ic"><path d="M1 13q-1-4 3-5l2-5q2-3 4 0v5q4 0 4 5z" fill="#eee" stroke="#345"/><path d="M6.500 7.500h9v8h-9z" fill="#e76c14" stroke="#8a3c05"/><path d="M10 8.500h2v3h2l-3 3-3-3h2z" fill="#fff" stroke="none"/></svg></button>
      <button class="drop" aria-label="360 menu"></button>
      <button class="tool ms-2" aria-label="Help"><svg class="ic"><circle cx="8" cy="8" r="7.500" fill="#fff" stroke="#444"/><path d="M5.500 6q0-2.500 2.500-2.500t2.500 2.500Q10.500 7 8 8.500V10M8 11v2" stroke="#1d4f9f" stroke-width="2"/></svg></button>
      <button class="drop helpdrop" aria-label="Help menu"></button>
      <button class="wbtn" aria-label="Minimize"><svg class="ic" stroke-width="2"><path d="M3 11h9"/></svg></button>
      <button class="wbtn" aria-label="Maximize"><svg class="ic"><path d="M5 4h7v7H5z" stroke-width="1.500"/></svg></button>
      <button class="wbtn me-1" aria-label="Close"><svg class="ic"><path d="m4 4 8 8M12 4l-8 8" stroke-width="2.500"/></svg></button>
    </div>
    <nav class="menu d-flex align-items-center light">
      <a href="#">File</a><a href="#">Edit</a><a href="#">View</a><a href="#">Insert</a><a href="#">Format</a><a href="#">Tools</a><a href="#">Draw</a><a href="#">Dimension</a><a href="#">Modify</a><a href="#">Parametric</a><a href="#">Window</a><a href="#">Help</a><a href="#">Express</a>
      <div class="d-flex ms-auto me-1">
      <button class="wbtn" aria-label="Minimize drawing"><svg class="ic" stroke-width="2"><path d="M3 11h9"/></svg></button>
      <button class="wbtn" aria-label="Restore drawing"><svg class="ic"><path d="M6.500 7V3.500h8v6H11M2.500 6.500h8v6h-8z" stroke-width="1.300"/></svg></button>
      <button class="wbtn" aria-label="Close drawing"><svg class="ic"><path d="m4 4 8 8M12 4l-8 8" stroke-width="2.500"/></svg></button>
      </div>
    </nav>
  </div>
</header>

<div class="strip d-flex align-items-end">
  <div class="doc ms-3 d-flex align-items-center justify-content-between"><svg class="shape" width="136" height="24"><path d="M0 24Q7 22 9 11T20 0h98q8 1 11 11t7 13z" fill="#b9b9b9" stroke="#ddd"/></svg><span>Drawing1*</span><button aria-label="Close tab"><svg width="9" height="9" stroke="#777" stroke-width="2"><path d="m1 1 7 7M8 1 1 8"/></svg></button></div>
  <button class="mb-1" aria-label="New tab"><svg width="24" height="17" fill="none"><path d="M1 1h15q6 2 6 15H9Q4 15 1 1z" fill="#7d7d7d" stroke="#4a4a4a"/><path d="M12 5v8M8 9h8" stroke="#aaa" stroke-width="3"/></svg></button>
</div>

<div class="d-flex tbrow overflow-hidden">
  <div class="bar flex-shrink-0">
    <span class="grip"></span>
    <button class="tool" aria-label="New drawing"><svg class="ic"><use href="#new"/></svg></button>
    <button class="tool" aria-label="Open drawing"><svg class="ic"><use href="#open"/></svg></button>
    <button class="tool" aria-label="Save drawing"><svg class="ic"><use href="#save"/></svg></button><i class="sep"></i>
    <button class="tool" aria-label="Plot drawing"><svg class="ic"><use href="#print"/></svg></button>
    <button class="tool" aria-label="Plot preview"><svg class="ic"><use href="#preview"/></svg></button>
    <button class="tool" aria-label="Publish"><svg class="ic"><use href="#publish"/></svg></button>
    <button class="tool" aria-label="3D print"><svg class="ic"><use href="#globe"/></svg></button><i class="sep"></i>
    <button class="tool" aria-label="Cut"><svg class="ic"><use href="#cut"/></svg></button>
    <button class="tool" aria-label="Copy"><svg class="ic"><use href="#copy"/></svg></button>
    <button class="tool" aria-label="Paste"><svg class="ic"><use href="#paste"/></svg></button>
    <button class="tool" aria-label="Match properties"><svg class="ic"><use href="#match"/></svg></button>
    <button class="tool" aria-label="Block editor"><svg class="ic"><use href="#block"/></svg></button><i class="sep"></i>
    <button class="tool off" aria-label="Undo"><svg class="ic"><use href="#undo"/></svg></button><button class="drop off" aria-label="Undo list"></button>
    <button class="tool off" aria-label="Redo"><svg class="ic"><use href="#redo"/></svg></button><button class="drop off" aria-label="Redo list"></button><i class="sep"></i>
    <button class="tool" aria-label="Pan"><svg class="ic"><use href="#pan"/></svg></button>
    <button class="tool" aria-label="Zoom realtime"><svg class="ic"><use href="#zoom"/></svg></button>
    <button class="tool" aria-label="Zoom window"><svg class="ic"><use href="#zoomw"/></svg></button>
    <button class="tool" aria-label="Zoom previous"><svg class="ic"><use href="#zoomp"/></svg></button><i class="sep"></i>
    <button class="tool" aria-label="Properties"><svg class="ic"><use href="#prop"/></svg></button>
    <button class="tool" aria-label="DesignCenter"><svg class="ic"><use href="#dc"/></svg></button>
    <button class="tool" aria-label="Tool palettes"><svg class="ic"><use href="#tp"/></svg></button>
    <button class="tool" aria-label="Sheet set"><svg class="ic"><use href="#sheet"/></svg></button>
    <button class="tool" aria-label="Markup set"><svg class="ic"><use href="#markup"/></svg></button>
    <button class="tool" aria-label="QuickCalc"><svg class="ic"><use href="#calc"/></svg></button><i class="sep"></i>
    <button class="tool" aria-label="Help topics"><svg class="ic"><use href="#qbox"/></svg></button>
  </div>
  <div class="bar flex-grow-1 overflow-hidden">
    <span class="grip"></span>
    <button class="tool" aria-label="Text style"><svg class="ic"><path d="m1 14 5-12 5 12M3 10h6" stroke="#222" stroke-width="2"/><use href="#brush" width="16" height="16"/></svg></button>
    <div class="combo sty"><select class="form-select" aria-label="Text style name"><option>Standard</option></select></div><i class="sep"></i>
    <button class="tool" aria-label="Dimension style"><svg class="ic"><use href="#dimst"/></svg></button>
    <div class="combo sty"><select class="form-select" aria-label="Dimension style name"><option>Standard</option></select></div><i class="sep"></i>
    <button class="tool" aria-label="Table style"><svg class="ic"><use href="#table" width="16" height="16"/><use href="#brush" width="16" height="16"/></svg></button>
    <div class="combo sty tight"><select class="form-select" aria-label="Table style name"><option>Standard</option></select></div>
  </div>
</div>

<div class="d-flex tbrow row2 overflow-hidden">
  <div class="bar flex-shrink-0">
    <span class="grip"></span>
    <div class="combo ws2"><select class="form-select" aria-label="Workspaces"><option>AutoCAD Classic</option></select></div>
    <button class="tool" aria-label="Workspace settings"><svg class="ic"><use href="#gear"/></svg></button>
    <button class="tool" aria-label="My workspace"><svg class="ic"><use href="#myws"/></svg></button>
  </div>
  <div class="bar flex-shrink-0">
    <span class="grip"></span>
    <button class="tool" aria-label="Layer properties"><svg class="ic"><use href="#layprop"/></svg></button>
    <div class="combo lay"><svg class="ic"><use href="#bulb"/></svg><svg class="ic"><use href="#sun"/></svg><svg class="ic"><use href="#vpf"/></svg><svg class="ic"><use href="#unlock"/></svg><svg class="ic swt"><use href="#sq"/></svg><select class="form-select ps-0" aria-label="Layer"><option>0</option></select></div>
    <button class="tool" aria-label="Make current"><svg class="ic"><use href="#laycur"/></svg></button>
    <button class="tool" aria-label="Layer previous"><svg class="ic"><use href="#layprev"/></svg></button>
    <button class="tool" aria-label="Layer states"><svg class="ic"><use href="#laystate"/></svg></button>
  </div>
  <div class="bar flex-grow-1 overflow-hidden">
    <span class="grip"></span>
    <div class="combo col1"><svg class="ic ms-1"><use href="#sq" width="14" height="14" y="1"/></svg><select class="form-select ps-0" aria-label="Color"><option>ByLayer</option></select></div><i class="sep"></i>
    <div class="combo col2"><span class="lt"></span><select class="form-select ps-1" aria-label="Linetype"><option>ByLayer</option></select></div><i class="sep"></i>
    <div class="combo col3"><span class="lt"></span><select class="form-select ps-1" aria-label="Lineweight"><option>ByLayer</option></select></div>
  </div>
</div>

<section class="work d-flex flex-grow-1">
  <aside class="vbar align-self-start"><div class="vgrip"></div>
    <button class="tool" aria-label="Line"><svg class="ic"><use href="#line"/></svg></button>
    <button class="tool" aria-label="Construction line"><svg class="ic"><use href="#xline"/></svg></button>
    <button class="tool" aria-label="Polyline"><svg class="ic"><use href="#pline"/></svg></button>
    <button class="tool" aria-label="Polygon"><svg class="ic"><use href="#poly"/></svg></button>
    <button class="tool" aria-label="Rectangle"><svg class="ic"><use href="#rect"/></svg></button>
    <button class="tool" aria-label="Arc"><svg class="ic"><use href="#arc"/></svg></button>
    <button class="tool" aria-label="Circle"><svg class="ic"><use href="#circle"/></svg></button>
    <button class="tool" aria-label="Revision cloud"><svg class="ic"><use href="#cloud"/></svg></button>
    <button class="tool" aria-label="Spline"><svg class="ic"><use href="#spline"/></svg></button>
    <button class="tool" aria-label="Ellipse"><svg class="ic"><use href="#ellipse"/></svg></button>
    <button class="tool" aria-label="Ellipse arc"><svg class="ic"><use href="#earc"/></svg></button>
    <button class="tool" aria-label="Insert block"><svg class="ic"><use href="#insb"/></svg></button>
    <button class="tool" aria-label="Make block"><svg class="ic"><use href="#mkb"/></svg></button>
    <button class="tool" aria-label="Point"><svg class="ic"><use href="#point"/></svg></button>
    <button class="tool" aria-label="Hatch"><svg class="ic"><use href="#hatch"/></svg></button>
    <button class="tool" aria-label="Gradient"><svg class="ic"><use href="#grad"/></svg></button>
    <button class="tool" aria-label="Region"><svg class="ic"><use href="#region"/></svg></button>
    <button class="tool" aria-label="Table"><svg class="ic"><use href="#table"/></svg></button>
    <button class="tool" aria-label="Multiline text"><svg class="ic"><use href="#mtext"/></svg></button>
    <button class="tool" aria-label="Add selected"><svg class="ic"><use href="#addsel"/></svg></button>
  </aside>

  <div class="view flex-grow-1">
    <div class="model">
      <svg class="scene" fill="none" stroke="#fff" shape-rendering="crispEdges">
        <path d="M9.500 435v60M0 435.500h9M791.500 0v484" stroke="#262e37"/>
        <path d="M9.500 0v435" stroke="#286a31"/><path d="M9 435.500h2000" stroke="#6f2c31"/>
        <path d="M603.500 366V131.500h-442v260H577M603.500 416v-24.500H628"/>
        <path d="M13.500 420v48.500H63M9.500 464.500h8v8h-8z"/>
        <g stroke="none" fill="#e5e5e5" font-family="Lato" font-weight="300" font-size="18" text-anchor="middle"><text x="21" y="415">Y</text><text x="75" y="468">X</text></g>
      </svg>
      <div class="vlabel d-flex"><button>[−]</button><button>[Top]</button><button>[2D Wireframe]</button></div>
      <svg class="cube" viewBox="0 0 92 124" font-family="Liberation Sans" font-weight="bold" text-anchor="middle" fill="#b8bcc0"><circle cx="46" cy="46" r="36" fill="none" stroke="#454b53" stroke-width="9"/><g font-size="14"><text x="46" y="13">N</text><text x="9" y="51">W</text><text x="84" y="51">E</text><text x="46" y="88">S</text></g><path d="M29 29h34v33H29z" fill="#b9bbbe" stroke="#8a8d90"/><path d="M35 34h22v22H35z" fill="#a9acb0"/><text x="46" y="49" font-size="8" fill="#444a52">TOP</text><rect x="21.500" y="106.500" width="47" height="16" rx="4" fill="#9898a3" stroke="#b7b7c2"/><text x="38" y="118" font-size="10" font-weight="400" fill="#dadae2">WCS</text><path d="M56 112h8l-4 4z" fill="none" stroke="#c4c4cc"/></svg>
      <div class="prompt d-flex"><label for="px" class="d-flex justify-content-between">Specify other corner point or <svg width="13" height="13" class="align-self-end" fill="none"><path d="M1 1h11v11H1z" fill="#eee" stroke="#224"/><path d="M4 5.500h5M6.500 3v5M4 10h5" stroke="#114"/></svg></label><input id="px" value="0.2823" size="6"><input value="-0.1659" size="6" aria-label="Y coordinate"></div>
    </div>
    <div class="vscroll d-flex flex-column align-items-center"><svg width="8" height="18"><path d="m0 11 4-4 4 4z" fill="#333"/></svg><span class="thumb mt-auto vth"></span><svg width="8" height="18"><path d="m0 7 4 4 4-4z" fill="#333"/></svg></div>
    <div class="sheets d-flex align-items-stretch">
      <button class="nv" aria-label="First"><svg width="8" height="8" fill="#555"><path d="M0 0h1v8H0zM8 0v8L3 4z"/></svg></button><button class="nv" aria-label="Previous"><svg width="5" height="8" fill="#555"><path d="M5 0v8L0 4z"/></svg></button><button class="nv" aria-label="Next"><svg width="5" height="8" fill="#555"><path d="M0 0v8l5-4z"/></svg></button><button class="nv" aria-label="Last"><svg width="8" height="8" fill="#555"><path d="M7 0h1v8H7zM0 0v8l5-4z"/></svg></button>
      <button class="sh shon">Model</button><button class="sh">Layout1</button><svg class="slash" width="9" height="16"><path d="M1 15.500 8 0" stroke="#333"/></svg><button class="sh">Layout2</button><svg class="slash" width="9" height="16"><path d="M1 15.500 8 0" stroke="#333"/></svg>
      <div class="hs d-flex align-items-center ms-auto"><i class="split"></i><svg width="18" height="8"><path d="M12 0v8L8 4z"/></svg><span class="thumb hth"></span><svg width="16" height="8" class="ms-auto"><path d="M6 0v8l4-4z"/></svg></div>
    </div>
    <div></div>
  </div>

  <aside class="rcol d-flex flex-column">
    <div class="vbar"><div class="vgrip"></div>
    <button class="tool" aria-label="Erase"><svg class="ic"><use href="#erase"/></svg></button>
    <button class="tool" aria-label="Copy objects"><svg class="ic"><use href="#mcopy"/></svg></button>
    <button class="tool" aria-label="Mirror"><svg class="ic"><use href="#mirror"/></svg></button>
    <button class="tool" aria-label="Offset"><svg class="ic"><use href="#offset"/></svg></button>
    <button class="tool" aria-label="Array"><svg class="ic"><use href="#array"/></svg></button>
    <button class="tool" aria-label="Move"><svg class="ic"><use href="#move"/></svg></button>
    <button class="tool" aria-label="Rotate"><svg class="ic"><use href="#rotate"/></svg></button>
    <button class="tool" aria-label="Scale"><svg class="ic"><use href="#scale"/></svg></button>
    <button class="tool" aria-label="Stretch"><svg class="ic"><use href="#stretch"/></svg></button>
    <button class="tool" aria-label="Trim"><svg class="ic"><use href="#trim"/></svg></button>
    <button class="tool" aria-label="Extend"><svg class="ic"><use href="#extend"/></svg></button>
    <button class="tool" aria-label="Break at point"><svg class="ic"><use href="#brkpt"/></svg></button>
    <button class="tool" aria-label="Break"><svg class="ic"><use href="#brk"/></svg></button>
    <button class="tool" aria-label="Join"><svg class="ic"><use href="#join"/></svg></button>
    <button class="tool" aria-label="Chamfer"><svg class="ic"><use href="#chamfer"/></svg></button>
    <button class="tool" aria-label="Fillet"><svg class="ic"><use href="#fillet"/></svg></button>
    <button class="tool" aria-label="Blend curves"><svg class="ic"><use href="#blend"/></svg></button>
    <button class="tool" aria-label="Explode"><svg class="ic"><use href="#explode"/></svg></button>
    </div>
    <div class="vbar flex-grow-1"><div class="vgrip"></div>
    <button class="tool" aria-label="Bring to front"><svg class="ic"><use href="#ord1"/></svg></button>
    <button class="tool" aria-label="Send to back"><svg class="ic"><use href="#ord2"/></svg></button>
    <button class="tool" aria-label="Bring above"><svg class="ic"><use href="#ord3"/></svg></button>
    <button class="tool" aria-label="Send under"><svg class="ic"><use href="#ord4"/></svg></button>
    </div>
  </aside>
</section>

<section class="cmd d-flex">
  <div class="cmdside d-flex flex-column align-items-center justify-content-between pb-1"><div class="cgrip"></div><button aria-label="Close command line"><svg width="9" height="9" stroke="#eee" stroke-width="2"><path d="m1 1 7 7M8 1 1 8"/></svg></button><button aria-label="Customize command line"><svg class="ic"><use href="#wrench"/></svg></button></div>
  <div class="flex-grow-1 d-flex flex-column">
    <div class="hist"><div>Command: _rectang</div><div>Specify first corner point or [Chamfer/Elevation/Fillet/Thickness/Width]:</div></div>
    <div class="line flex-grow-1 d-flex align-items-center"><svg class="ic"><use href="#rect"/></svg><button class="drop" aria-label="Recent commands"></button><b class="rc">RECTANG</b><span>Specify other corner point or [<a href="#" class="opt">Area</a> <a href="#" class="opt">Dimensions</a> <a href="#" class="opt">Rotation</a>]:</span></div>
  </div>
</section>

<footer class="status d-flex align-items-start">
  <div class="coords">0.3799,  0.0282 , 0.0000</div>
  <button class="tool" aria-label="Infer constraints"><svg class="ic"><path d="M0 6.500h12M6.500 0v12M4.500 4.500h4v4h-4z"/><path d="M10.500 8v7M12.500 7.500h3v3h-3z" stroke="#1863ad"/></svg></button>
  <button class="tool" aria-label="Snap"><svg class="ic"><path d="M1 3.500h10M1 6.500h10M1 9.500h10M1 12.500h13" stroke-dasharray="1 2"/><path d="M13.500 2v8"/></svg></button>
  <button class="tool on" aria-label="Grid"><svg class="ic"><path d="M.5.500h15v15H.5zM3.500 0v16M6.500 0v16M9.500 0v16M12.500 0v16M0 3.500h16M0 6.500h16M0 9.500h16M0 12.500h16"/></svg></button>
  <button class="tool" aria-label="Ortho"><svg class="ic"><path d="M.5 1v13.500H16M.5 9.500h5v5"/></svg></button>
  <button class="tool on" aria-label="Polar"><svg class="ic"><path d="M12 4A5.500 5.500 0 1 0 12 12M6 8.500h9M6 8.500l7-7M11 3v6"/></svg></button>
  <button class="tool on" aria-label="Object snap"><svg class="ic"><path d="M2.500 3.500h13v12h-13z" fill="url(#gp)"/><circle cx="2" cy="2.500" r="2" stroke="#d7531a" fill="#fff"/></svg></button>
  <button class="tool" aria-label="3D object snap"><svg class="ic"><path d="m3.500 5 3-3.500h9v8l-4 4h-8zM3.500 5h8v8M11.500 5l4-3.500" fill="url(#gp)"/><circle cx="2.500" cy="13" r="2" stroke="#d7531a" fill="#fff"/></svg></button>
  <button class="tool on" aria-label="Object snap tracking"><svg class="ic"><path d="M14 3 3 12.500h12M6 7l4 4"/></svg></button>
  <button class="tool on" aria-label="Dynamic UCS"><svg class="ic"><path d="M1.500 1v13.500H16M2 14 10 6"/><path d="m13 0-3 4h2l-1 4 4-5h-2l2-3z" fill="#f8a01c" stroke="none"/></svg></button>
  <button class="tool on" aria-label="Dynamic input"><svg class="ic"><path d="M1 6.500h9M5.500 2v9" stroke-width="1.500"/><path d="M7.500 8.500h7v4h-7z" fill="#fff"/></svg></button>
  <button class="tool" aria-label="Lineweight"><svg class="ic"><path d="M2 8h12" stroke-width="2"/><path d="M8.500 2v12"/></svg></button>
  <button class="tool on" aria-label="Transparency"><svg class="ic"><path d="M.5.500h15v15H.5z" fill="#fff" stroke="#2c6faa"/><path d="M2 2h12v12H2z" fill="url(#chk)" stroke="none"/></svg></button>
  <button class="tool" aria-label="Quick properties"><svg class="ic"><path d="M4.500 3.500h7v10h-7z" fill="#fff" stroke="#000"/><path d="M6 6h4M6 8.500h4M6 11h4" stroke-width="1.500" stroke-dasharray="1.500 1"/></svg></button>
  <button class="tool" aria-label="Selection cycling"><svg class="ic"><path d="M0 3.500h7M3.500 0v7"/><path d="M4.500 5.500h6v6h-6z" fill="#ddd"/><path d="M8.500 8.500h7v7h-7z" fill="#7db768" stroke="#326b22"/></svg></button>
  <button class="tool" aria-label="Annotation monitor"><svg class="ic"><path d="M5.500.5h5v5h5v5h-5v5h-5v-5h-5v-5h5z" fill="#eee"/></svg></button>
  <button class="sbt ms-auto">MODEL</button>
  <button class="tool" aria-label="Quick view layouts"><svg class="ic"><path d="M1.500 1.500h12v10h-12z" fill="#eee"/><path d="M5 4v5.500h5zM0 14.500h15" stroke-width="1.500"/></svg></button>
  <button class="tool" aria-label="Quick view drawings"><svg class="ic"><path d="M.5 2.500h7v7h-7zM8.500 2.500h7v7h-7zM.5 11.500h15v2H.5z" fill="#eee"/></svg></button>
  <button class="sbt scl"><svg class="ic"><use href="#ann"/></svg><span>1:1</span><span class="caret"></span></button>
  <button class="tool" aria-label="Annotation visibility"><svg class="ic"><use href="#ann" width="14" height="16"/><circle cx="13" cy="11" r="3" fill="#ffc848" stroke="#e68a10"/></svg></button>
  <button class="tool dim" aria-label="Auto scale"><svg class="ic"><use href="#ann" opacity=".6"/></svg></button>
  <button class="tool ms-1" aria-label="Workspace switching"><svg class="ic"><use href="#gear" width="16" height="16"/><path d="M17 12v5h-5z" fill="#000" stroke="none"/></svg></button>
  <button class="tool" aria-label="Lock"><svg class="ic"><path d="M8.500 7V4q0-2.500 3-2.500t3 2.500v3" stroke-width="2"/><path d="M1.500 6.500h10v9h-10z" fill="#eee"/><path d="M6.500 9v4"/></svg></button>
  <button class="tool" aria-label="Performance"><svg class="ic"><circle cx="7.500" cy="8" r="6.500" fill="#ea6b2a" stroke="#d0672c"/><path d="m4 4 3 3M7 4l1 2" stroke="#ffd5b8" stroke-width="2"/></svg></button>
  <div class="iso d-flex align-items-center justify-content-around"><svg class="ic"><path d="m1 14 8-8q-1-5 4-5l-2 3 1 1 3-2q1 5-4 5l-8 8z" fill="#eee" stroke="#333"/></svg><svg class="ic"><use href="#bulb"/></svg></div>
  <button class="drop sbt" aria-label="Status menu"></button>
  <button class="tool" aria-label="Clean screen"><svg class="ic"><path d="M.5 1.500h14v13H.5z" fill="#eef"/><path d="M1 3h13" stroke-width="3"/></svg></button>
  <svg width="16" height="22"><path d="M12 9h2v2h-2zM8 13h2v2H8zM12 13h2v2h-2zM4 17h2v2H4zM8 17h2v2H8zM12 17h2v2h-2z" fill="#ddd"/></svg>
</footer>
</main>

<nav class="task d-flex align-items-center" aria-label="Taskbar">
  <button class="tk start" aria-label="Start"><svg viewBox="0 0 36 36"><circle cx="18" cy="18" r="17.500" fill="url(#orb)" stroke="#1a3a60"/><path d="M8 5Q18-1 28 5q3 6-10 6T8 5z" fill="#fff" opacity=".35"/><path d="M9 11q4-3 8-1l-2 7q-4-2-8 1z" fill="#ec6237"/><path d="M18.500 10.500q4 2 9 0l-2 7q-5 2-9 0z" fill="#93c946"/><path d="M7 19q4-3 8-1l-2 7q-4-2-8 1z" fill="#5bb4ec"/><path d="M16 19q4 2 9 0l-2 7q-5 2-9 0z" fill="#fbcb3b"/></svg></button>
  <button class="tk" aria-label="Internet Explorer"><svg viewBox="0 0 32 32" fill="none"><path d="M26 22a10 10 0 1 1 1-6H9" stroke="#155fae" stroke-width="6"/><path d="M25 22a10 10 0 1 1 1-6H9" stroke="#43a2e4" stroke-width="3"/><path d="M3 29Q-1 25 8 14T30 3Q32 6 28 11" stroke="#f2bd2a" stroke-width="2.500"/></svg></button>
  <button class="tk" aria-label="Media Player"><svg viewBox="0 0 32 32"><path d="M12 6h15l1 20-16 1z" fill="#a9d7ef" stroke="#3f89b5"/><path d="M8 5h16v22H8z" fill="#bfe3f5" stroke="#3f89b5"/><path d="M4 4h17v23H4z" fill="#8fcbea" stroke="#3b7ba5"/><circle cx="13" cy="16" r="8" fill="#f07a1a" stroke="#fff"/><path d="m10 11 8 5-8 5z" fill="#fff"/></svg></button>
  <button class="tk" aria-label="Explorer"><svg viewBox="0 0 32 32"><path d="M2 3h10l2 3h15v23H2z" fill="#e6c869" stroke="#b8963c"/><path d="M5 2h7v4H5z" fill="#3ba557"/><path d="M15 3h7v4h-7z" fill="#dd5544"/><path d="M1 10h30v19H1z" fill="#f8e7a3" stroke="#ccab55"/><path d="M5 31v-9q0-4 4-4h13q4 0 4 4v9h-5v-7H10v7z" fill="#9bd4f2" stroke="#4b9acb"/></svg></button>
  <button class="tk act" aria-label="Chrome"><svg viewBox="0 0 32 32"><circle cx="16" cy="16" r="15" fill="#ffcf33"/><path d="M16 16 3 8.500A15 15 0 0 1 29 9H16z" fill="#e33b2e"/><path d="M3 8.500 10 19l6 4-3 8A15 15 0 0 1 3 8.500z" fill="#2fa24f"/><circle cx="16" cy="16" r="7" fill="#fff"/><circle cx="16" cy="16" r="5.500" fill="#3f7ef0"/></svg></button>
  <button class="tk" aria-label="Firefox"><svg viewBox="0 0 32 32"><circle cx="17" cy="15" r="14" fill="#1b5fa8"/><circle cx="20" cy="9" r="6" fill="#5ab4e8"/><path d="M4 6Q5 8 9 8q5 0 7 3l-4 3q1 6 7 6 6-1 7-7 2 9-4 12-6 2-10-1 5 6 12 3 5-2 7-12Q33 31 17 31 2 31 1.500 16 2 10 4 6z" fill="#ee7118"/><path d="M27 4q6 8 3 16-4 10-14 11 9-4 11-12z" fill="#fbc02b"/></svg></button>
  <button class="tk act" aria-label="AutoCAD"><svg viewBox="0 0 32 32"><path d="M0 0h32v32H0z" fill="url(#red)"/><use href="#logo" x="5" y="2" width="22" height="24"/></svg></button>
  <button class="tk act" aria-label="Paint"><svg viewBox="0 0 32 32"><path d="M3 25Q-1 16 7 9T25 8q7 6 2 14t-12 7q-4-1-2-5-3-2-5 1t-5 0z" fill="#c6e2f4" stroke="#5689b3"/><circle cx="7" cy="18" r="2.500" fill="#d33"/><circle cx="11" cy="12" r="2.500" fill="#4a4"/><circle cx="18" cy="10" r="2.500" fill="#eb3"/><circle cx="15" cy="19" r="2.500" fill="#79b"/><path d="m18 30 8-24 3 1z" fill="#e58a22"/><path d="M25 1h6l-1 6h-5z" fill="#a98562"/></svg></button>
  <div class="tray d-flex ms-auto gap-2">
    <svg viewBox="0 0 16 16" fill="none"><path d="M1 6q7-6 13 1 1 5-6 5M3 8q4-3 8 1-2 4-8 3" stroke="#555" stroke-width="2.500"/><path d="M2 5q6-5 11 1M4 8q4-2 6 1" stroke="#ddd"/></svg>
    <svg viewBox="0 0 16 16" fill="none"><path d="m2 9 4 4 8-10" stroke="#278a2c" stroke-width="4"/><path d="m2 9 4 4 8-10" stroke="#6fe26a" stroke-width="2"/></svg>
    <svg viewBox="0 0 16 16"><path d="M2 1v14M3 2h4l3 1h4v7H9L7 9H3" fill="#eee" stroke="#eee"/><circle cx="11" cy="11" r="4.500" fill="#d22f2f" stroke="#fff" stroke-width=".6"/><path d="m9 9 4 4M13 9l-4 4" stroke="#fff" stroke-width="1.500"/></svg>
    <svg viewBox="0 0 16 16"><path d="M5 4h10v8H5z" fill="#54718c" stroke="#fff" stroke-width="1.500"/><path d="M7 15h8M2.500 5v8h2M.5 1v4h4V1" fill="none" stroke="#fff" stroke-width="1.500"/></svg>
    <svg viewBox="0 0 16 16"><path d="M4 6h2l5-5v14l-5-5H4z" fill="#fff" stroke="#567"/></svg>
  </div>
  <div class="clock">9:32 AM<br>4/4/2016</div>
  <button class="desk" aria-label="Show desktop"></button>
</nav>
<script src="https://cdn.jsdelivr.net/npm/bootstrap@5.3.0/dist/js/bootstrap.bundle.min.js"></script>
<script>document.getElementById('px').select();</script>
</body>
</html>
